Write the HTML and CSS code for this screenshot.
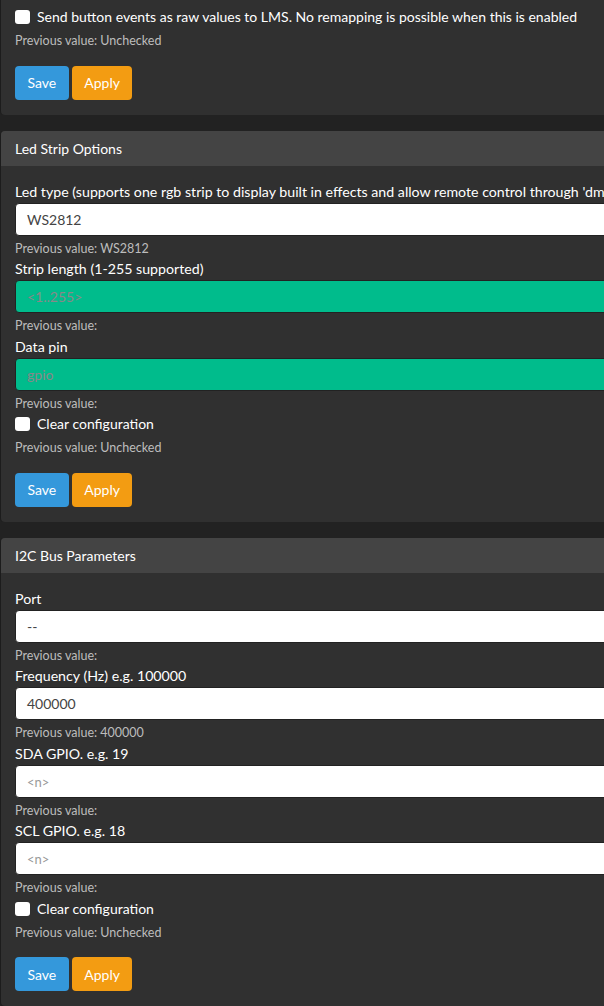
FILE: index.html
```html
<!DOCTYPE html>
<html lang="en">
<head>
<meta charset="utf-8">
<title>Configuration</title>
<link rel="stylesheet" href="styles.css">
</head>
<body>
<div class="page">
  <section class="card">
    <div class="card-body first">
      <label class="check"><span class="box"></span><span>Send button events as raw values to LMS. No remapping is possible when this is enabled</span></label>
      <div class="prev">Previous value: Unchecked</div>
      <div class="actions">
        <button class="btn btn-info">Save</button>
        <button class="btn btn-warning">Apply</button>
      </div>
    </div>
  </section>

  <section class="card">
    <div class="card-header">Led Strip Options</div>
    <div class="card-body">
      <label class="lbl">Led type (supports one rgb strip to display built in effects and allow remote control through 'dmx' messaging)</label>
      <div class="input">WS2812</div>
      <div class="prev">Previous value: WS2812</div>
      <label class="lbl">Strip length (1-255 supported)</label>
      <div class="input green"><span class="ph">&lt;1..255&gt;</span></div>
      <div class="prev">Previous value:</div>
      <label class="lbl">Data pin</label>
      <div class="input green"><span class="ph">gpio</span></div>
      <div class="prev">Previous value:</div>
      <label class="check"><span class="box"></span><span>Clear configuration</span></label>
      <div class="prev">Previous value: Unchecked</div>
      <div class="actions">
        <button class="btn btn-info">Save</button>
        <button class="btn btn-warning">Apply</button>
      </div>
    </div>
  </section>

  <section class="card">
    <div class="card-header">I2C Bus Parameters</div>
    <div class="card-body">
      <label class="lbl">Port</label>
      <div class="input">--</div>
      <div class="prev">Previous value:</div>
      <label class="lbl">Frequency (Hz) e.g. 100000</label>
      <div class="input">400000</div>
      <div class="prev">Previous value: 400000</div>
      <label class="lbl">SDA GPIO. e.g. 19</label>
      <div class="input"><span class="ph light">&lt;n&gt;</span></div>
      <div class="prev">Previous value:</div>
      <label class="lbl">SCL GPIO. e.g. 18</label>
      <div class="input"><span class="ph light">&lt;n&gt;</span></div>
      <div class="prev">Previous value:</div>
      <label class="check"><span class="box"></span><span>Clear configuration</span></label>
      <div class="prev">Previous value: Unchecked</div>
      <div class="actions">
        <button class="btn btn-info">Save</button>
        <button class="btn btn-warning">Apply</button>
      </div>
    </div>
  </section>
</div>
</body>
</html>
```

FILE: styles.css
```css
html, body {
  margin: 0;
  padding: 0;
  overflow: hidden;
  background: #222222;
}
body {
  font-family: Lato, "Noto Sans", sans-serif;
  font-size: 15px;
  color: #ffffff;
}
.page {
  width: 900px;
  margin-top: -8px;
  padding-left: 1px;
  display: flex;
  flex-direction: column;
  gap: 16px;
}
.card {
  background: #303030;
  border-radius: 4px;
  overflow: hidden;
  box-shadow: -1px 0 0 rgba(0, 0, 0, 0.15);
}
.card-header {
  background: #444444;
  height: 35px;
  line-height: 35px;
  padding: 0 14px;
  font-size: 14px;
}
.card-body {
  padding: 15px 14px 15px 14px;
  display: flex;
  flex-direction: column;
}
.card-body.first {
  padding-top: 14px;
}
.lbl {
  display: block;
  line-height: 22px;
  font-size: 14.2px;
}
.input {
  height: 33px;
  line-height: 31px;
  box-sizing: border-box;
  border: 1px solid #222;
  border-radius: 4px;
  background: #ffffff;
  color: #444444;
  padding: 0 11px;
  font-size: 14px;
}
.input.green {
  background: #00bc8c;
}
.ph {
  color: #888888;
}
.ph.light {
  color: #999999;
  font-size: 13px;
}
.prev {
  margin-top: 4px;
  line-height: 18.5px;
  font-size: 12.5px;
  color: #bdbdbd;
}
.check {
  display: flex;
  align-items: center;
  gap: 7px;
  line-height: 22px;
  font-size: 14px;
}
.box {
  width: 15px;
  height: 14px;
  background: #ffffff;
  border-radius: 3px;
  flex: none;
}
.actions {
  display: flex;
  gap: 3px;
  margin-top: 15px;
}
.btn {
  font-family: inherit;
  font-size: 14px;
  color: #ffffff;
  border: none;
  border-radius: 4px;
  height: 34px;
  padding: 0 12.5px;
}
.btn-info {
  background: #3498db;
}
.btn-warning {
  background: #f39c12;
}
```
